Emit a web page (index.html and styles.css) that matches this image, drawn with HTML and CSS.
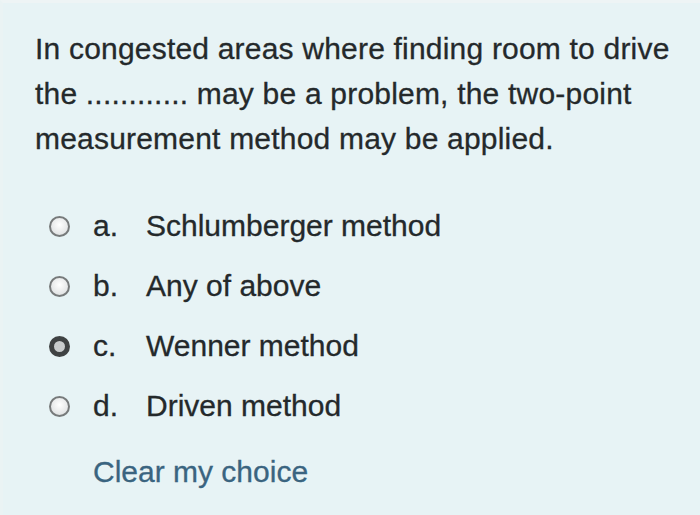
FILE: index.html
```html
<!DOCTYPE html>
<html lang="en">
<head>
    <meta charset="UTF-8">
    <title>Question</title>
    <link rel="stylesheet" href="styles.css">
</head>
<body>

<div class="formulation">
    <p class="qtext">In congested areas where finding room to drive the ............ may be a problem, the two-point measurement method may be applied.</p>

    <div class="answer">
        <div class="option">
            <span class="radio"></span>
            <span class="answernumber">a.</span>
            <span class="label">Schlumberger method</span>
        </div>
        <div class="option">
            <span class="radio"></span>
            <span class="answernumber">b.</span>
            <span class="label">Any of above</span>
        </div>
        <div class="option">
            <span class="radio checked"></span>
            <span class="answernumber">c.</span>
            <span class="label">Wenner method</span>
        </div>
        <div class="option">
            <span class="radio"></span>
            <span class="answernumber">d.</span>
            <span class="label">Driven method</span>
        </div>
    </div>

    <a class="clear-choice" href="#">Clear my choice</a>
</div>

</body>
</html>
```

FILE: styles.css
```css
html, body {
    margin: 0;
    background: #e7f3f5;
}
.formulation {
    border-top: 3px solid #eef4f5;
    border-left: 3px solid #eaf3f4;
    padding: 23px 20px 0 32px;
    height: 489px;
    font-family: "Liberation Sans", Arial, sans-serif;
    font-size: 30px;
    color: #24292b;
    -webkit-text-stroke: 0.3px #24292b;
}
.qtext {
    margin: 0;
    line-height: 45px;
    width: 640px;
    letter-spacing: 0.2px;
}
.answer {
    margin-top: 35px;
}
.option {
    display: flex;
    align-items: center;
    height: 60px;
}
.radio {
    width: 17px;
    height: 17px;
    border: 2px solid #777a7b;
    border-radius: 50%;
    background: radial-gradient(circle at 50% 40%, #ffffff, #d8dadb);
    margin-left: 14px;
    margin-right: 23px;
}
.radio.checked {
    width: 11px;
    height: 11px;
    border: 5px solid #3f4243;
    background: #c9cccd;
}
.answernumber {
    width: 53px;
}
.clear-choice {
    display: block;
    margin: 14px 0 0 58px;
    line-height: 44px;
    color: #3a6480;
    -webkit-text-stroke: 0.3px #3a6480;
    text-decoration: none;
}
```
